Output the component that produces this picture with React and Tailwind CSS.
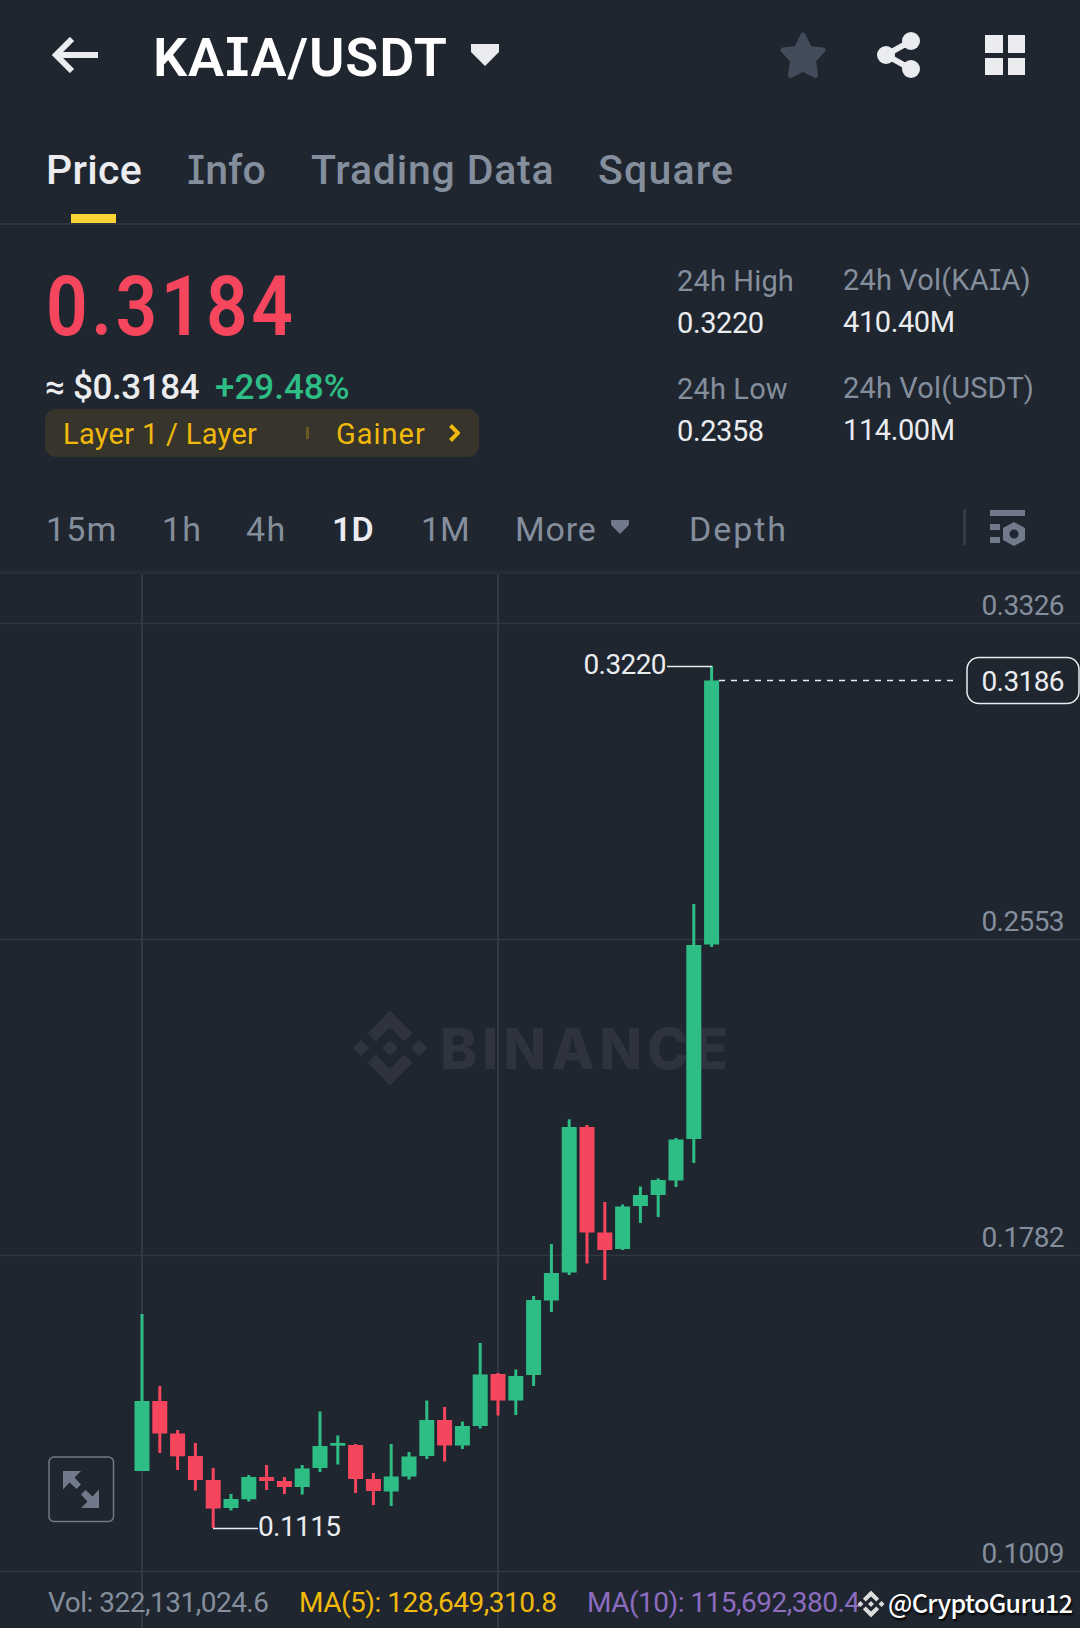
const TABS = [
  { label: 'Price', className: 'w-[97px] tracking-[0.3px]', active: true },
  { label: 'Info', className: 'w-[80px]' },
  { label: 'Trading Data', className: 'w-[243px] tracking-[0.8px]' },
  { label: 'Square', className: 'w-[140px] tracking-[1.2px]' },
];

const INTERVALS = [
  { label: '15m', className: 'w-[116px] tracking-[1.2px]' },
  { label: '1h', className: 'w-[84px] tracking-[1.2px]' },
  { label: '4h', className: 'w-[86px] tracking-[1.5px]' },
  { label: '1D', className: 'w-[89px] font-semibold text-[#eaecef]' },
  { label: '1M', className: 'w-[94px]' },
];

const STATS = [
  {
    className: 'w-[166px] pt-[41px]',
    items: [
      { label: '24h High', value: '0.3220' },
      { label: '24h Low', value: '0.2358' },
    ],
  },
  {
    className: 'w-[237px] pt-[40px]',
    items: [
      { label: '24h Vol(KAIA)', value: '410.40M' },
      { label: '24h Vol(USDT)', value: '114.00M' },
    ],
  },
];

// [up, wick top, wick bottom, body top, body bottom]
const CANDLES = [
  [1, 1314, 1471, 1401, 1471],
  [0, 1386, 1453, 1401, 1433.5],
  [0, 1430, 1470, 1433.5, 1456.3],
  [0, 1443, 1490.5, 1456, 1480],
  [0, 1468, 1528, 1480, 1508.5],
  [1, 1494, 1510.5, 1499, 1508],
  [1, 1475, 1501.5, 1477, 1499.3],
  [0, 1465, 1490, 1477, 1481],
  [0, 1477, 1494, 1481, 1487],
  [1, 1465, 1494.5, 1468.5, 1487],
  [1, 1411.5, 1472, 1446, 1468],
  [1, 1435.5, 1464.5, 1443, 1445.7],
  [0, 1444, 1493, 1445, 1479],
  [0, 1473, 1505, 1479, 1491],
  [1, 1444, 1506, 1476.5, 1491.5],
  [1, 1452, 1479.5, 1456.5, 1476.5],
  [1, 1400.5, 1459, 1420, 1456],
  [0, 1407, 1461.5, 1420, 1445.5],
  [1, 1421.5, 1449, 1426, 1445.5],
  [1, 1343, 1428.5, 1374.5, 1426],
  [0, 1373, 1415.5, 1374, 1400.5],
  [1, 1369.5, 1415, 1376, 1400.5],
  [1, 1296, 1386, 1300, 1375],
  [1, 1244, 1312, 1273, 1300.5],
  [1, 1119.3, 1275, 1127, 1272.5],
  [0, 1125, 1263.5, 1127, 1232.5],
  [0, 1202, 1280, 1232.5, 1250],
  [1, 1204.5, 1250, 1206.5, 1249],
  [1, 1186.5, 1223, 1195, 1206],
  [1, 1178.5, 1217, 1180, 1195],
  [1, 1138, 1187, 1139.5, 1180.5],
  [1, 904, 1163, 945, 1139],
  [1, 666, 947, 680.5, 944.5],
];

const GRID = [
  { y: 623.5, label: '0.3326' },
  { y: 939.5, label: '0.2553' },
  { y: 1255.5, label: '0.1782' },
  { y: 1571.5, label: '0.1009' },
];

const UP = '#2ebd85';
const DOWN = '#f6465d';

// Capital I with serifs so it does not read as a lowercase l
function Label({ text }) {
  return text.split(/(I)/).map((part, i) =>
    part === 'I' ? (
      <span
        key={i}
        className="font-['Inter'] text-[0.98em] [font-feature-settings:'cv08']"
      >
        I
      </span>
    ) : (
      part
    )
  );
}

function Caret({ className }) {
  return (
    <svg viewBox="0 0 28 22" className={className} fill="currentColor">
      <path d="M0 0h28v8L14 22 0 8z" />
    </svg>
  );
}

function Logo(props) {
  return (
    <svg viewBox="0 0 75 75" {...props}>
      <path d="M37.5 0 60.2 22.7 52 30.9 37.5 17 23 30.9 14.8 22.7z" />
      <path d="M37.5 75 60.2 52.3 52 44.1 37.5 58 23 44.1 14.8 52.3z" />
      <path d="M37.5 29.2l8.3 8.3-8.3 8.3-8.3-8.3zM8.3 29.2l8.3 8.3-8.3 8.3L0 37.5zM66.7 29.2l8.3 8.3-8.3 8.3-8.3-8.3z" />
    </svg>
  );
}

function Header() {
  return (
    <header className="flex h-[110px] items-center pl-[52px] text-[#eaecef]">
      <svg viewBox="0 0 46 36" className="h-9 w-[46px]" fill="none" stroke="currentColor" strokeWidth="6">
        <path d="M4 18h42M20 2 4 18l16 16" />
      </svg>
      <h1 className="ml-[55px] w-[297px] pt-[5px] text-[54px] leading-none font-semibold tracking-[0.9px] whitespace-nowrap text-white">
        <Label text="KAIA/USDT" />
      </h1>
      <Caret className="ml-[21px] h-[22px] w-7" />
      <svg viewBox="0 0 46 48" className="ml-[281px] h-12 w-[46px] text-[#434c5a]" fill="currentColor" stroke="currentColor" strokeWidth="5" strokeLinejoin="round">
        <path d="M23 4l6.4 13.5L43 19l-9.5 10.3L35.5 44.5 23 38 10.5 44.5 12.5 29.3 3 19l13.6-1.5z" />
      </svg>
      <svg viewBox="0 0 43 46" className="ml-[51px] h-[46px] w-[43px]" fill="currentColor">
        <circle cx="9" cy="23" r="9" />
        <circle cx="34" cy="9" r="9" />
        <circle cx="34" cy="37" r="9" />
        <path d="M34 9 9 23l25 14" fill="none" stroke="currentColor" strokeWidth="6" />
      </svg>
      <div className="ml-[65px] grid grid-cols-2 gap-[5px]">
        <span className="h-[17.5px] w-[17.5px] bg-[#eaecef]" />
        <span className="h-[17.5px] w-[17.5px] bg-[#eaecef]" />
        <span className="h-[17.5px] w-[17.5px] bg-[#eaecef]" />
        <span className="h-[17.5px] w-[17.5px] bg-[#eaecef]" />
      </div>
    </header>
  );
}

function Tabs() {
  return (
    <nav className="flex h-[115px] gap-[44px] border-b-2 border-[#2f3641] pt-[30px] pl-[46px]">
      {TABS.map((tab) => (
        <div key={tab.label} className={tab.className}>
          <div
            className={
              tab.active
                ? 'text-[41px] leading-[60px] font-medium whitespace-nowrap text-[#eaecef]'
                : 'text-[41px] leading-[60px] font-medium whitespace-nowrap text-[#848e9c]'
            }
          >
            <Label text={tab.label} />
          </div>
          {tab.active && (
            <div className="mt-[14px] ml-[25px] h-[9px] w-[45px] bg-[#fcd535]" />
          )}
        </div>
      ))}
    </nav>
  );
}

function Summary() {
  return (
    <section className="flex h-[261px]">
      <div className="w-[677px] pt-[46px] pl-[45px]">
        <div className="ml-px origin-left scale-x-[0.88] text-[83px] leading-[72px] font-semibold tracking-[4px] text-[#f6465d]">
          0.3184
        </div>
        <div className="mt-[25px] flex text-[35px] leading-[39px] font-medium">
          <span className="w-[28px] text-[#eaecef]">≈</span>
          <span className="w-[142px] tracking-[-0.4px] text-[#eaecef]">$0.3184</span>
          <span className="text-[#2ebd85]">+29.48%</span>
        </div>
        <div className="mt-[2px] flex h-12 w-[434px] items-center rounded-[11px] bg-[#37342c] pl-[18px] text-[29px] text-[#f0b90b]">
          <span className="w-[243px] pt-[3px] tracking-[0.3px]">Layer 1 / Layer</span>
          <span className="h-3 w-[3px] bg-[#6b5722]" />
          <span className="ml-[27px] w-[113px] pt-[3px] tracking-[1px]">Gainer</span>
          <svg viewBox="0 0 11 18" className="h-[18px] w-[11px]" fill="none" stroke="currentColor" strokeWidth="4">
            <path d="M1.5 1.5 9 9l-7.5 7.5" />
          </svg>
        </div>
      </div>
      {STATS.map((column, i) => (
        <div key={i} className={column.className}>
          {column.items.map((item) => (
            <div key={item.label} className="mb-9 text-[29px] leading-[30px] whitespace-nowrap">
              <div className="tracking-[0.15px] text-[#848e9c]">
                <Label text={item.label} />
              </div>
              <div className="mt-3 tracking-[-0.4px] text-[#eaecef]">{item.value}</div>
            </div>
          ))}
        </div>
      ))}
    </section>
  );
}

function Intervals() {
  return (
    <div className="flex h-[88px] items-center border-b-[3px] border-[#272c38] pt-px pl-[46px] text-[34px] text-[#848e9c]">
      {INTERVALS.map((item) => (
        <span key={item.label} className={item.className}>
          {item.label}
        </span>
      ))}
      <span className="w-[96px] tracking-[0.8px]">More</span>
      <Caret className="mb-1 h-[14px] w-[18px] text-[#707a8a]" />
      <span className="ml-[60px] w-[274px] tracking-[1.9px]">Depth</span>
      <span className="mb-1 h-9 w-[3px] bg-[#333b47]" />
      <svg viewBox="0 0 35 36" className="mb-[3px] ml-[24px] h-9 w-[35px]" fill="#707a8a">
        <path d="M0 0h35v6H0zM0 14h10v6H0zM0 27h10v6H0z" />
        <path fillRule="evenodd" d="M24 12l11 6v12l-11 6-11-6V18zm0 7.5a4.5 4.5 0 1 0 0 9 4.5 4.5 0 0 0 0-9z" />
      </svg>
    </div>
  );
}

function Chart() {
  return (
    <svg viewBox="0 574 1080 1054" className="block h-[1054px] w-[1080px] font-['Roboto'] text-[28px]">
      <g fill="#2e333d">
        <Logo x="352.5" y="1010.5" width="75" height="75" />
        <text x="440" y="1068.5" textLength="288" className="font-['Inter'] text-[56px] font-extrabold">
          BINANCE
        </text>
      </g>

      <g stroke="#313843">
        {GRID.map((row) => (
          <line key={row.y} x1="0" x2="1080" y1={row.y} y2={row.y} strokeWidth="1.5" />
        ))}
        <line x1="142" x2="142" y1="574" y2="1628" strokeWidth="2" />
        <line x1="498" x2="498" y1="574" y2="1628" strokeWidth="2" />
      </g>
      {GRID.map((row) => (
        <text key={row.label} x="981.5" y={row.y - 8.5} textLength="83" fill="#848e9c">
          {row.label}
        </text>
      ))}

      {CANDLES.map(([up, high, low, top, bottom], i) => {
        const x = 142 + i * 17.8;
        return (
          <g key={i} fill={up ? UP : DOWN}>
            <rect x={x - 1.5} y={high} width="3" height={low - high} />
            <rect x={x - 7.5} y={top} width="15" height={bottom - top} />
          </g>
        );
      })}

      <g stroke="#eaecef" strokeWidth="1.5" fill="none">
        <path d="M667 666.5h45M213 1528.5h45" />
        <path d="M719 680.5h234" strokeDasharray="6 6" />
        <rect x="967" y="657.5" width="112" height="46" rx="12" />
      </g>
      <g fill="#eaecef">
        <text x="583.5" y="674" textLength="83">0.3220</text>
        <text x="258" y="1536" textLength="83">0.1115</text>
        <text x="981.5" y="690.5" textLength="83">0.3186</text>
      </g>

      <rect x="49" y="1457" width="64.5" height="64.5" rx="5" fill="none" stroke="#707a8a" strokeWidth="1.5" />
      <path d="M63 1471h18l-6.500 6.500 6.500 7-4.500 4.500-7-6.500-6.500 7zM99 1508h-18l6.500-6.500-6.500-7 4.500-4.500 7 6.500 6.500-7z" fill="#707a8a" />

      <text x="48" y="1612" textLength="221" fill="#848e9c">Vol: 322,131,024.6</text>
      <text x="299" y="1612" textLength="258" fill="#f0b90b">MA(5): 128,649,310.8</text>
      <text x="587" y="1612" textLength="273" fill="#8d6cc0">MA(10): 115,692,380.4</text>

      <Logo x="857.5" y="1590.5" width="27" height="27" fill="#dcdcdc" />
      <text
        x="888"
        y="1613"
        textLength="185"
        fill="#fff"
        className="font-['Noto_Sans_CJK_SC',sans-serif] text-[25px] font-medium [text-shadow:1px_2px_2px_#000]"
      >
        @CryptoGuru12
      </text>
    </svg>
  );
}

export default function App() {
  return (
    <main className="h-[1628px] w-[1080px] overflow-hidden bg-[#1f262f] font-['Roboto',sans-serif]">
      <Header />
      <Tabs />
      <Summary />
      <Intervals />
      <Chart />
    </main>
  );
}
